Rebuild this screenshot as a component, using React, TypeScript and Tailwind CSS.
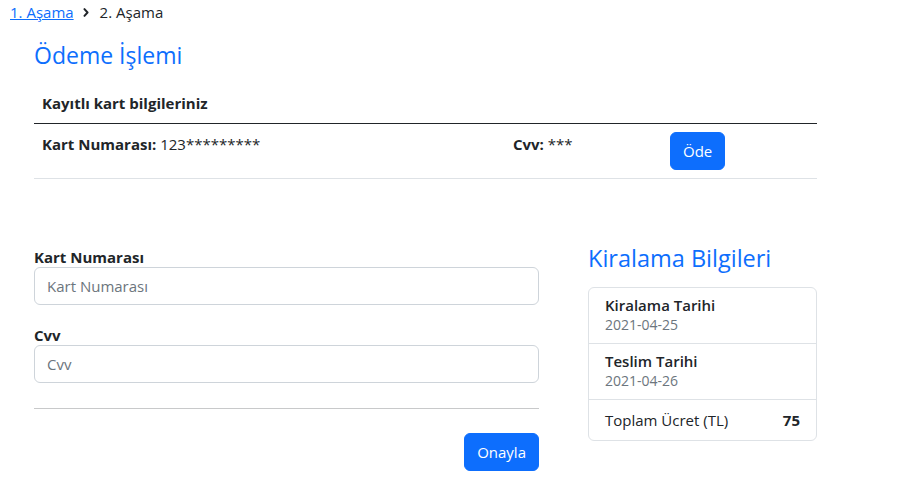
const font = { fontFamily: '"Open Sans", "Noto Sans", sans-serif' };

function ChevronRight() {
  return (
    <svg viewBox="0 0 6 10" className="w-[6px] h-[9px]" fill="none" stroke="#212529" strokeWidth="2.2" strokeLinecap="round" strokeLinejoin="round">
      <path d="M1.3 1.3L4.7 5 1.3 8.7" />
    </svg>
  );
}

export default function App() {
  return (
    <div className="bg-white text-[#212529] text-[15px] leading-6 min-h-[498px] w-[902px]" style={font}>
      {/* Breadcrumb */}
      <nav className="flex items-center h-6 pl-[10px]">
        <a href="#" className="text-[#0d6efd] underline">1. Aşama</a>
        <span className="ml-[9px] mr-[11px] flex items-center"><ChevronRight /></span>
        <span>2. Aşama</span>
      </nav>

      <div className="pl-[34px] w-[817px]">
        <h4 className="text-[#0d6efd] text-[23px] leading-[1.2] font-medium mt-[18px] mb-[13px]">Ödeme İşlemi</h4>

        {/* Saved card table */}
        <table className="w-full border-collapse">
          <thead>
            <tr className="border-b border-[#212529]">
              <th className="text-left font-bold px-2 py-2" colSpan={3}>Kayıtlı kart bilgileriniz</th>
            </tr>
          </thead>
          <tbody>
            <tr className="border-b border-[#dee2e6]">
              <td className="px-2 py-2 align-top w-[471px]">
                <span className="font-bold">Kart Numarası:</span> 123*********
              </td>
              <td className="px-2 py-2 align-top w-[157px]">
                <span className="font-bold">Cvv:</span> ***
              </td>
              <td className="px-2 py-2 align-top">
                <button className="bg-[#0d6efd] text-white rounded-[6px] px-3 py-[6px] leading-6 border border-[#0d6efd]">Öde</button>
              </td>
            </tr>
          </tbody>
        </table>

        <div className="flex gap-[49px] mt-[60px]">
          {/* Form */}
          <div className="w-[505px]">
            <label className="block font-bold leading-6 mt-[6px] mb-[-2px]">Kart Numarası</label>
            <input
              placeholder="Kart Numarası"
              className="block w-full h-[38px] border border-[#ced4da] rounded-[6px] px-3 placeholder:text-[#6c757d] outline-none"
            />
            <label className="block font-bold leading-6 mt-[18px] mb-[-2px]">Cvv</label>
            <input
              placeholder="Cvv"
              className="block w-full h-[38px] border border-[#ced4da] rounded-[6px] px-3 placeholder:text-[#6c757d] outline-none"
            />
            <hr className="border-0 border-t border-[#c8c9ca] mt-[25px] mb-[24px]" />
            <div className="flex justify-end">
              <button className="bg-[#0d6efd] text-white rounded-[6px] px-3 py-[6px] leading-6 border border-[#0d6efd]">Onayla</button>
            </div>
          </div>

          {/* Rental info */}
          <div className="w-[229px]">
            <h4 className="text-[#0d6efd] text-[23.5px] leading-[1.2] font-medium mt-[5px] mb-[15px]">Kiralama Bilgileri</h4>
            <ul className="border border-[#dee2e6] rounded-[6px]">
              <li className="px-4 py-2 border-b border-[#dee2e6]">
                <div className="font-semibold leading-[1.2]">Kiralama Tarihi</div>
                <div className="text-[14px] leading-[21px] text-[#6c757d]">2021-04-25</div>
              </li>
              <li className="px-4 py-2 border-b border-[#dee2e6]">
                <div className="font-semibold leading-[1.2]">Teslim Tarihi</div>
                <div className="text-[14px] leading-[21px] text-[#6c757d]">2021-04-26</div>
              </li>
              <li className="px-4 py-2 flex justify-between">
                <span>Toplam Ücret (TL)</span>
                <span className="font-bold">75</span>
              </li>
            </ul>
          </div>
        </div>
      </div>
    </div>
  );
}
